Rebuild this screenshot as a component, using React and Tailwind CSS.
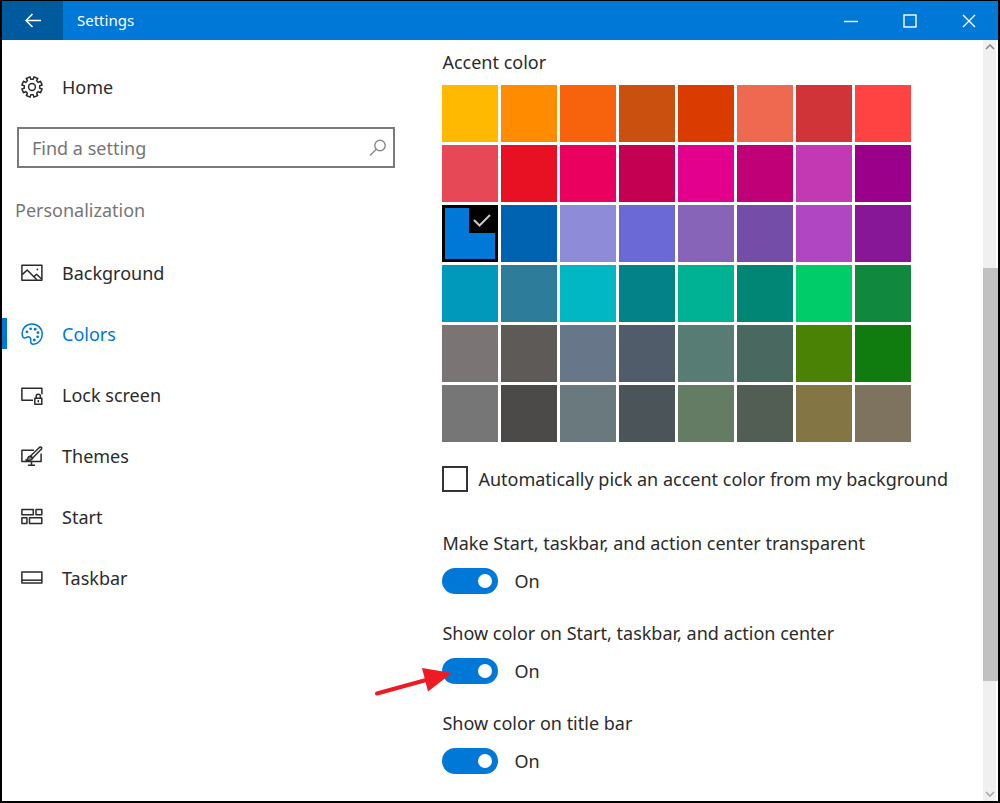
import React, { useState } from "react";

const swatches = [
  "bg-[#ffb900]", "bg-[#ff8c00]", "bg-[#f7630c]", "bg-[#ca5010]", "bg-[#da3b01]", "bg-[#ef6950]", "bg-[#d13438]", "bg-[#ff4343]",
  "bg-[#e74856]", "bg-[#e81123]", "bg-[#ea005e]", "bg-[#c30052]", "bg-[#e3008c]", "bg-[#bf0077]", "bg-[#c239b3]", "bg-[#9a0089]",
  "bg-[#0078d7]", "bg-[#0063b1]", "bg-[#8e8cd8]", "bg-[#6b69d6]", "bg-[#8764b8]", "bg-[#744da9]", "bg-[#b146c2]", "bg-[#881798]",
  "bg-[#0099bc]", "bg-[#2d7d9a]", "bg-[#00b7c3]", "bg-[#038387]", "bg-[#00b294]", "bg-[#018574]", "bg-[#00cc6a]", "bg-[#10893e]",
  "bg-[#7a7574]", "bg-[#5d5a58]", "bg-[#68768a]", "bg-[#515c6b]", "bg-[#567c73]", "bg-[#486860]", "bg-[#498205]", "bg-[#107c10]",
  "bg-[#767676]", "bg-[#4c4a48]", "bg-[#69797e]", "bg-[#4a5459]", "bg-[#647c64]", "bg-[#525e54]", "bg-[#847545]", "bg-[#7e735f]",
];

// Eight teeth, with a notch at the top
const gearPath = () => {
  const points = [];
  for (let i = 0; i < 8; i++) {
    const mid = (i * 45 + 22.5) * (Math.PI / 180);
    [[-0.24, 7.8], [-0.2, 10.3], [0.2, 10.3], [0.24, 7.8]].forEach(([offset, r]) => {
      const a = mid + offset;
      points.push(`${(11 + r * Math.sin(a)).toFixed(2)} ${(11 - r * Math.cos(a)).toFixed(2)}`);
    });
  }
  return `M${points.join("L")}Z`;
};

const Icon = ({ children }) => (
  <svg
    className="w-[22px] h-[22px] shrink-0"
    viewBox="0 0 22 22"
    fill="none"
    stroke="currentColor"
    strokeWidth="1.5"
    strokeLinejoin="round"
    aria-hidden="true"
  >
    {children}
  </svg>
);

const navItems = [
  {
    name: "Background",
    icon: (
      <Icon>
        <rect x="0.9" y="3.2" width="20" height="15" />
        <path d="M1.2 12.6 6.2 8l9.6 9.8M13 14.6l2.6-2.4 5 4.8" />
        <circle cx="16.4" cy="7.4" r="0.9" fill="currentColor" stroke="none" />
      </Icon>
    ),
  },
  {
    name: "Colors",
    icon: (
      <Icon>
        <path d="M1.2 11.4C0.6 5.2 5.4 1 11 1c5.7 0 10.2 4.3 10.2 10.2 0 5.6-4 10-8.7 10-2.4 0-3-1.4-2.8-3.2.2-1.9.1-3.9-2-4.2-1.8-.2-2.4 1.3-3.8 1.3-1.5 0-2.5-1.7-2.7-3.7Z" />
        <g fill="currentColor" stroke="none">
          <circle cx="6" cy="8.8" r="1.4" />
          <circle cx="9.6" cy="5.8" r="1.4" />
          <circle cx="14.2" cy="6.2" r="1.4" />
          <circle cx="17" cy="9.7" r="1.4" />
          <circle cx="16.6" cy="13.8" r="1.4" />
          <circle cx="13.3" cy="17" r="1.4" />
        </g>
      </Icon>
    ),
  },
  {
    name: "Lock screen",
    icon: (
      <Icon>
        <path d="M12 16.2H0.9V4.2h20v6" />
        <rect x="13.8" y="14.2" width="7" height="6" />
        <path d="M15.2 14v-1.6a2.1 2.1 0 0 1 4.2 0V14M17.3 16v2.2" />
      </Icon>
    ),
  },
  {
    name: "Themes",
    icon: (
      <Icon>
        <path d="M13 5.2H0.9v11.4h19.2V8.5M10.5 17v3M7 20.2h7" />
        <path d="M20.4 2.4c-.8-.8-1.7-.3-2.3.3L9.6 11l2.1 2.1 8.3-8.6c.6-.6 1-1.5.4-2.1Z" />
        <path d="M9.4 11.2c-2 0-2.5 1.3-2.7 2.4-.2.9-.8 1.4-1.8 1.4 2.6 1 6.300.6 6.6-2Z" fill="currentColor" fillOpacity="0.5" />
      </Icon>
    ),
  },
  {
    name: "Start",
    icon: (
      <Icon>
        <rect x="0.9" y="3.6" width="11.4" height="5.2" />
        <rect x="15" y="3.6" width="5.8" height="5.2" />
        <rect x="0.9" y="11.8" width="5" height="5.6" />
        <rect x="8.5" y="11.8" width="12.3" height="5.6" />
      </Icon>
    ),
  },
  {
    name: "Taskbar",
    icon: (
      <Icon>
        <rect x="0.9" y="5" width="20" height="11" />
        <path d="M1 13.2h20" />
      </Icon>
    ),
  },
];

const toggles = [
  { id: "transparent", label: "Make Start, taskbar, and action center transparent" },
  { id: "start-color", label: "Show color on Start, taskbar, and action center", arrow: true },
  { id: "title-color", label: "Show color on title bar" },
];

const Toggle = ({ id, label, arrow }) => {
  const [on, setOn] = useState(true);

  return (
    <div className="h-[90px]">
      <label htmlFor={id} className="block leading-6">
        {label}
      </label>
      <div className="relative flex items-center gap-4 mt-[13px] h-[26px]">
        <input
          id={id}
          type="checkbox"
          role="switch"
          checked={on}
          onChange={() => setOn(!on)}
          className="appearance-none flex items-center w-14 h-[26px] px-[6px] rounded-full bg-[#8a8a8a] checked:bg-[#0078d7] checked:justify-end before:w-[14px] before:h-[14px] before:rounded-full before:bg-white"
        />
        <span>{on ? "On" : "Off"}</span>
        {arrow && (
          <svg
            className="absolute -left-[68px] top-[6px] w-20 h-8 pointer-events-none"
            viewBox="0 0 80 32"
            aria-hidden="true"
          >
            <path d="M3 29.5 54 15.5" stroke="#ed1c24" strokeWidth="4" strokeLinecap="round" />
            <path d="M48 4 78 9 54 27.5Z" fill="#ed1c24" />
          </svg>
        )}
      </div>
    </div>
  );
};

const App = () => {
  const [active, setActive] = useState("Colors");
  const [accent, setAccent] = useState(16);

  return (
    <div className="flex flex-col min-h-screen bg-white border-2 border-t border-black font-['Noto_Sans',sans-serif] text-lg text-[#2b2b2b]">
      {/* Title bar */}
      <header className="flex items-stretch h-[39px] bg-[#0078d7] text-white">
        <button aria-label="Back" className="flex items-center justify-center w-[61px] bg-[#005a9e]">
          <svg className="w-4 h-4" viewBox="0 0 16 16" fill="none" stroke="currentColor" strokeWidth="1.5">
            <path d="M16 7.5H1M7.500 1 1 7.5 7.500 14" />
          </svg>
        </button>
        <h1 className="flex-1 flex items-center pl-[14px] text-[15px]">Settings</h1>
        <button aria-label="Minimize" className="flex items-center justify-center w-[59px]">
          <svg className="w-[14px] h-[14px]" viewBox="0 0 14 14" fill="none" stroke="currentColor" strokeWidth="1.4">
            <path d="M0 7.5h14" />
          </svg>
        </button>
        <button aria-label="Maximize" className="flex items-center justify-center w-[59px]">
          <svg className="w-[14px] h-[14px]" viewBox="0 0 14 14" fill="none" stroke="currentColor" strokeWidth="1.4">
            <rect x="1" y="1" width="12" height="12" />
          </svg>
        </button>
        <button aria-label="Close" className="flex items-center justify-center w-[59px]">
          <svg className="w-[14px] h-[14px]" viewBox="0 0 14 14" fill="none" stroke="currentColor" strokeWidth="1.4">
            <path d="m1 1 12 12M13 1 1 13" />
          </svg>
        </button>
      </header>

      <div className="flex flex-1">
        {/* Sidebar */}
        <aside className="w-2/5 pt-4">
          <a href="#home" className="flex items-center gap-[19px] h-[61px] pl-[19px]">
            <Icon>
              <path d={gearPath()} />
              <circle cx="11" cy="11" r="3.4" />
            </Icon>
            Home
          </a>
          <div className="flex items-center h-[41px] mt-[10px] ml-[15px] mr-[5px] pl-[13px] pr-[6px] border-2 border-[#7a7a7a]">
            <input
              type="text"
              aria-label="Find a setting"
              placeholder="Find a setting"
              className="flex-1 min-w-0 outline-none placeholder:text-[#757575]"
            />
            <svg className="w-[18px] h-[18px] text-[#8a8a8a]" viewBox="0 0 18 18" fill="none" stroke="currentColor" strokeWidth="1.4" aria-hidden="true">
              <circle cx="11" cy="6.5" r="5.2" />
              <path d="M7.3 10.2 1 16.5" />
            </svg>
          </div>
          <h2 className="mt-[30px] mb-5 pl-[13px] leading-6 text-[#767676]">Personalization</h2>
          <nav>
            {navItems.map((item) => (
              <a
                key={item.name}
                href={`#${item.name}`}
                onClick={() => setActive(item.name)}
                className={`flex items-center h-[61px] ${active === item.name ? "text-[#0078d7]" : ""}`}
              >
                <span className={`w-[5px] h-[31px] mr-[14px] ${active === item.name ? "bg-[#0078d7]" : ""}`} />
                {item.icon}
                <span className="pl-[19px]">{item.name}</span>
              </a>
            ))}
          </nav>
        </aside>

        {/* Colors page */}
        <main className="flex-1 pl-[42px] pt-[10px]">
          <h2 className="leading-6">Accent color</h2>
          <div className="grid grid-cols-[repeat(8,56px)] gap-[3px] mt-[11px]">
            {swatches.map((color, i) => (
              <button
                key={color}
                aria-label={`Accent color ${i + 1}`}
                aria-pressed={accent === i}
                onClick={() => setAccent(i)}
                className={`flex justify-end items-start h-[57px] ${color} ${accent === i ? "border-3 border-black" : ""}`}
              >
                {accent === i && (
                  <svg className="w-[26px] h-[25px] bg-black" viewBox="0 0 26 25" fill="none" stroke="#c8c8c8" strokeWidth="2">
                    <path d="m5 12 5.5 5.5L21 7" />
                  </svg>
                )}
              </button>
            ))}
          </div>

          <div className="flex items-center gap-[10px] mt-6 mb-10 h-[25px]">
            <input
              id="auto-accent"
              type="checkbox"
              className="appearance-none w-[26px] h-[26px] border-2 border-[#333] checked:bg-[#0078d7]"
            />
            <label htmlFor="auto-accent" className="whitespace-nowrap">
              Automatically pick an accent color from my background
            </label>
          </div>

          {toggles.map((toggle) => (
            <Toggle key={toggle.id} {...toggle} />
          ))}
        </main>

        {/* Scrollbar */}
        <div className="flex flex-col w-[15px]" aria-hidden="true">
          <div className="flex flex-col grow-[224] basis-0 w-[13px] pt-1 items-center bg-[#f0f0f0]">
            <svg className="w-[10px] h-[6px]" viewBox="0 0 10 6" fill="none" stroke="#8a8a8a" strokeWidth="1.6">
              <path d="m1 5 4-4 4 4" />
            </svg>
          </div>
          <div className="grow-[413] basis-0 bg-[#c1c1c1]" />
          <div className="flex flex-col grow-[116] basis-0 w-[13px] pb-1 items-center justify-end bg-[#f0f0f0]">
            <svg className="w-[10px] h-[6px]" viewBox="0 0 10 6" fill="none" stroke="#a8a8a8" strokeWidth="1.6">
              <path d="m1 1 4 4 4-4" />
            </svg>
          </div>
        </div>
      </div>
    </div>
  );
};

export default App;
